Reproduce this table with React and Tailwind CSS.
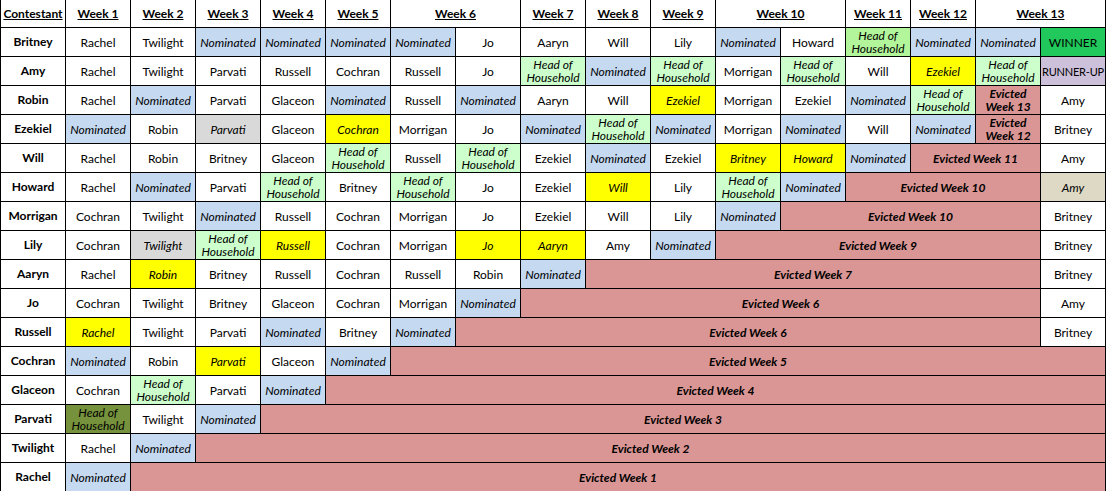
// Big Brother-style voting history grid
import React from 'react';

const NOM = { t: 'nom', s: 'Nominated' };
const HOH = { t: 'hoh' };
const HOH2 = { t: 'hohBright' };
const y = (s) => ({ t: 'yellow', s });
const g = (s) => ({ t: 'gray', s });
const ev = (w, span) => ({ t: 'evicted', s: `Evicted Week ${w}`, span });
const ev2 = (w) => ({ t: 'evicted2', s: `Week ${w}` });

const HEADERS = [
  ['Contestant', 1], ['Week 1', 1], ['Week 2', 1], ['Week 3', 1], ['Week 4', 1], ['Week 5', 1],
  ['Week 6', 2], ['Week 7', 1], ['Week 8', 1], ['Week 9', 1], ['Week 10', 2], ['Week 11', 1],
  ['Week 12', 1], ['Week 13', 2],
];

const ROWS = [
  ['Britney', ['Rachel', 'Twilight', NOM, NOM, NOM, NOM, 'Jo', 'Aaryn', 'Will', 'Lily', NOM, 'Howard', HOH2, NOM, NOM, { t: 'winner', s: 'WINNER' }]],
  ['Amy', ['Rachel', 'Twilight', 'Parvati', 'Russell', 'Cochran', 'Russell', 'Jo', HOH, NOM, HOH, 'Morrigan', HOH, 'Will', y('Ezekiel'), HOH, { t: 'runner', s: 'RUNNER-UP' }]],
  ['Robin', ['Rachel', NOM, 'Parvati', 'Glaceon', NOM, 'Russell', NOM, 'Aaryn', 'Will', y('Ezekiel'), 'Morrigan', 'Ezekiel', NOM, HOH, ev2(13), 'Amy']],
  ['Ezekiel', [NOM, 'Robin', g('Parvati'), 'Glaceon', y('Cochran'), 'Morrigan', 'Jo', NOM, HOH, NOM, 'Morrigan', NOM, 'Will', NOM, ev2(12), 'Britney']],
  ['Will', ['Rachel', 'Robin', 'Britney', 'Glaceon', HOH, 'Russell', HOH, 'Ezekiel', NOM, 'Ezekiel', y('Britney'), y('Howard'), NOM, ev(11, 2), 'Amy']],
  ['Howard', ['Rachel', NOM, 'Parvati', HOH, 'Britney', HOH, 'Jo', 'Ezekiel', y('Will'), 'Lily', HOH, NOM, ev(10, 3), { t: 'tan', s: 'Amy' }]],
  ['Morrigan', ['Cochran', 'Twilight', NOM, 'Russell', 'Cochran', 'Morrigan', 'Jo', 'Ezekiel', 'Will', 'Lily', NOM, ev(10, 4), 'Britney']],
  ['Lily', ['Cochran', g('Twilight'), HOH, y('Russell'), 'Cochran', 'Morrigan', y('Jo'), y('Aaryn'), 'Amy', NOM, ev(9, 5), 'Britney']],
  ['Aaryn', ['Rachel', y('Robin'), 'Britney', 'Russell', 'Cochran', 'Russell', 'Robin', NOM, ev(7, 7), 'Britney']],
  ['Jo', ['Cochran', 'Twilight', 'Britney', 'Glaceon', 'Cochran', 'Morrigan', NOM, ev(6, 8), 'Amy']],
  ['Russell', [y('Rachel'), 'Twilight', 'Parvati', NOM, 'Britney', NOM, ev(6, 9), 'Britney']],
  ['Cochran', [NOM, 'Robin', y('Parvati'), 'Glaceon', NOM, ev(5, 11)]],
  ['Glaceon', ['Cochran', HOH, 'Parvati', NOM, ev(4, 12)]],
  ['Parvati', [{ t: 'olive' }, 'Twilight', NOM, ev(3, 13)]],
  ['Twilight', ['Rachel', NOM, ev(2, 14)]],
  ['Rachel', [NOM, ev(1, 15)]],
];

const SPAN = {
  1: '', 2: 'col-span-2', 3: 'col-span-3', 4: 'col-span-4', 5: 'col-span-5', 7: 'col-span-7',
  8: 'col-span-8', 9: 'col-span-9', 11: 'col-span-11', 12: 'col-span-12', 13: 'col-span-13',
  14: 'col-span-14', 15: 'col-span-15',
};

const STYLE = {
  plain: 'bg-white',
  nom: 'bg-[#c5d9f1] italic',
  hoh: 'bg-[#ccffcc] italic',
  hohBright: 'bg-[#b3f59b] italic',
  olive: 'bg-[#76923c] italic',
  yellow: 'bg-[#ffff00] italic',
  gray: 'bg-[#d9d9d9] italic',
  evicted: 'bg-[#da9694] italic font-bold',
  evicted2: 'bg-[#da9694] italic font-bold',
  winner: 'bg-[#21c85b]',
  runner: 'bg-[#ccc0da] text-[11px] tracking-[-0.2px]',
  tan: 'bg-[#ddd9c4] italic',
};

function Cell({ cell }) {
  const c = typeof cell === 'string' ? { t: 'plain', s: cell } : cell;
  const span = SPAN[c.span || 1];
  let body = c.s;
  if (c.t === 'hoh' || c.t === 'hohBright' || c.t === 'olive') {
    body = <>Head of<br />Household</>;
  } else if (c.t === 'evicted2') {
    body = <>Evicted<br />{c.s}</>;
  }
  return (
    <div className={`${STYLE[c.t]} ${span} flex items-center justify-center text-center leading-[13px] whitespace-nowrap overflow-hidden`}>
      {body}
    </div>
  );
}

export default function App() {
  return (
    <div className="bg-white w-[1107px] h-[491px] overflow-hidden" style={{ fontFamily: 'Lato, "Open Sans", sans-serif' }}>
      <div className="grid grid-cols-[repeat(17,64px)] grid-rows-[27px_repeat(16,28px)] gap-px bg-black px-px w-fit text-[12px] text-black">
        {HEADERS.map(([h, span]) => (
          <div key={h} className={`${SPAN[span]} bg-white flex items-center justify-center font-bold underline`}>{h}</div>
        ))}
        {ROWS.map(([name, cells]) => (
          <React.Fragment key={name}>
            <div className="bg-white flex items-center justify-center font-bold">{name}</div>
            {cells.map((c, i) => <Cell key={i} cell={c} />)}
          </React.Fragment>
        ))}
      </div>
    </div>
  );
}
